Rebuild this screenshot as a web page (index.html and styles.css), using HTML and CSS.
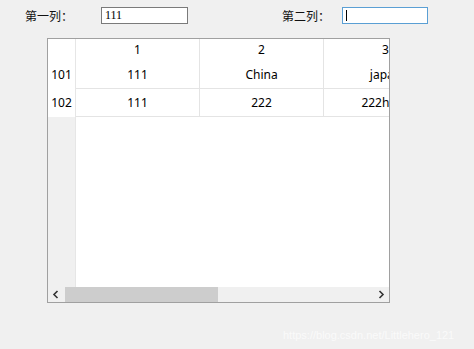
FILE: index.html
```html
<!DOCTYPE html>
<html lang="zh-CN">
<head>
    <meta charset="UTF-8">
    <meta name="viewport" content="width=device-width, initial-scale=1.0">
    <title>QTableWidget</title>
    <link rel="stylesheet" href="styles.css">
</head>
<body>
    <div class="form-row">
        <span class="label first-label">第一列：</span>
        <input type="text" class="field" value="111">
        <span class="label second-label">第二列：</span>
        <div class="field focused"><span class="caret"></span></div>
    </div>
    <div class="table-frame">
        <div class="table-area">
            <div class="row-header">
                <div class="corner"></div>
                <div class="row-num">101</div>
                <div class="row-num">102</div>
                <div class="row-rest"></div>
            </div>
            <div class="table-body">
                <div class="grid-row head">
                    <div class="cell">1</div>
                    <div class="cell">2</div>
                    <div class="cell">3</div>
                </div>
                <div class="grid-row data">
                    <div class="cell">111</div>
                    <div class="cell">China</div>
                    <div class="cell">japan</div>
                </div>
                <div class="grid-row data">
                    <div class="cell">111</div>
                    <div class="cell">222</div>
                    <div class="cell">222hello</div>
                </div>
            </div>
        </div>
        <div class="hscroll">
            <div class="arrow">
                <svg width="8" height="9" viewBox="0 0 8 9"><path d="M5.5 1 L2 4.5 L5.5 8" fill="none" stroke="#333" stroke-width="1.6"/></svg>
            </div>
            <div class="track"><div class="thumb"></div></div>
            <div class="arrow">
                <svg width="8" height="9" viewBox="0 0 8 9"><path d="M2.5 1 L6 4.5 L2.5 8" fill="none" stroke="#333" stroke-width="1.6"/></svg>
            </div>
        </div>
    </div>
    <div class="watermark">https://blog.csdn.net/Littlehero_121</div>
</body>
</html>
```

FILE: styles.css
```css
body {
    margin: 0;
    background: #f0f0f0;
    font-family: "Noto Sans", "Noto Sans CJK SC", sans-serif;
    font-size: 12px;
    color: #000;
    width: 474px;
    height: 349px;
    overflow: hidden;
}
.form-row {
    display: flex;
    align-items: center;
    height: 17px;
    padding-top: 7px;
}
.label {
    font-family: "Noto Sans CJK SC", sans-serif;
    font-size: 12px;
    line-height: 17px;
    color: #111;
}
.first-label {
    margin-left: 25px;
    width: 76px;
}
.second-label {
    margin-left: 94px;
    width: 60px;
}
.field {
    box-sizing: border-box;
    width: 87px;
    height: 17px;
    margin: 0;
    padding: 0 3px;
    border: 1px solid #7a7a7a;
    background: #fff;
    font-family: "Liberation Serif", serif;
    font-size: 12px;
    color: #000;
    outline: none;
}
.focused {
    width: 86px;
    border-color: #5a9fd4;
    display: flex;
    align-items: center;
}
.caret {
    width: 1px;
    height: 11px;
    background: #000;
}
.table-frame {
    box-sizing: border-box;
    margin: 14px 0 0 47px;
    width: 343px;
    height: 265px;
    border: 1px solid #a0a0a0;
    background: #fff;
    display: flex;
    flex-direction: column;
}
.table-area {
    flex: 1;
    display: flex;
    overflow: hidden;
}
.row-header {
    width: 27px;
    border-right: 1px solid #e6e6e6;
    display: flex;
    flex-direction: column;
}
.corner {
    height: 22px;
    background: #fff;
}
.row-num {
    height: 28px;
    line-height: 28px;
    text-align: center;
    background: #fff;
}
.row-rest {
    flex: 1;
    background: #f0f0f0;
}
.table-body {
    flex: 1;
    overflow: hidden;
}
.grid-row {
    display: flex;
    width: 400px;
}
.head {
    height: 22px;
    line-height: 22px;
}
.data {
    height: 27px;
    line-height: 28px;
    border-bottom: 1px solid #e4e4e4;
}
.cell {
    flex: 0 0 123px;
    border-right: 1px solid #e4e4e4;
    text-align: center;
    white-space: nowrap;
    overflow: hidden;
}
.hscroll {
    height: 15px;
    display: flex;
    background: #f0f0f0;
}
.arrow {
    width: 16px;
    display: flex;
    align-items: center;
    justify-content: center;
}
.track {
    flex: 1;
    display: flex;
    align-items: stretch;
}
.thumb {
    width: 153px;
    margin-left: 1px;
    background: #cdcdcd;
}
.watermark {
    margin: 26px 0 0 283px;
    font-family: "Liberation Sans", sans-serif;
    font-size: 11px;
    color: #fafafa;
}
```
